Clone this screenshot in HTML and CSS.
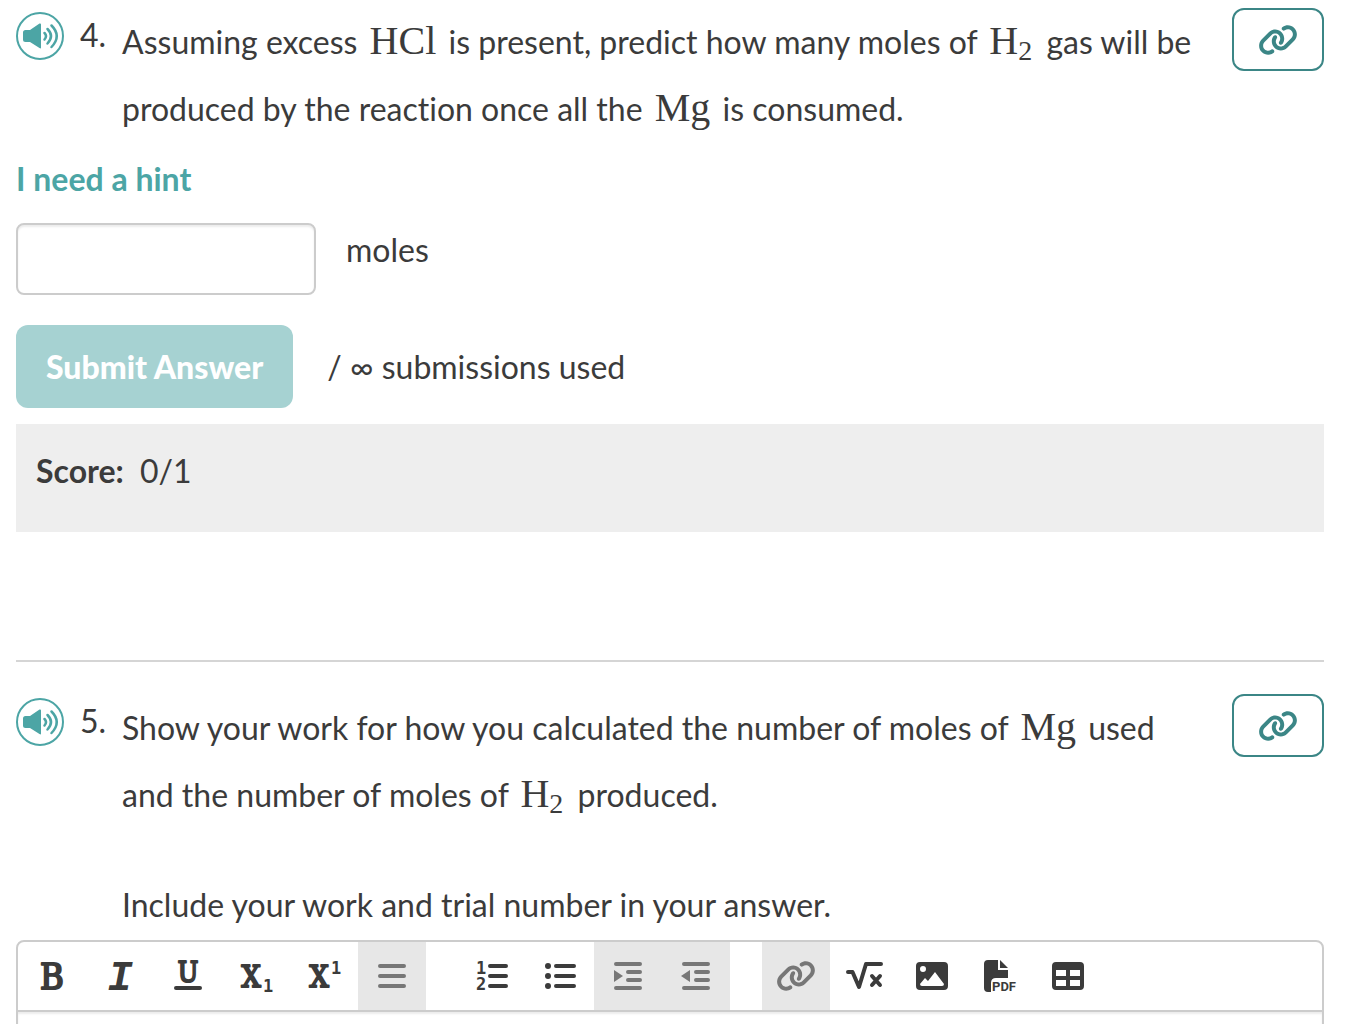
FILE: index.html
```html
<!DOCTYPE html>
<html lang="en">
<head>
    <meta charset="UTF-8">
    <meta name="viewport" content="width=device-width, initial-scale=1.0">
    <title>Lab Questions</title>
    <link rel="stylesheet" href="styles.css">
</head>
<body>
    <!-- shared icons -->
    <svg class="sprite" aria-hidden="true">
        <symbol id="icon-link" viewBox="0 0 640 512">
            <path fill="currentColor" d="M579.8 267.7c56.5-56.5 56.5-148 0-204.5c-50-50-128.8-56.5-186.3-15.4l-1.6 1.1c-14.4 10.3-17.7 30.3-7.4 44.6s30.3 17.7 44.6 7.4l1.6-1.1c32.1-22.9 76-19.3 103.8 8.6c31.5 31.5 31.5 82.5 0 114L422.3 334.8c-31.5 31.5-82.5 31.5-114 0c-27.9-27.9-31.5-71.8-8.6-103.8l1.1-1.6c10.3-14.4 6.9-34.4-7.4-44.6s-34.4-6.9-44.6 7.4l-1.1 1.6C206.5 251.2 213 330 263 380c56.5 56.5 148 56.5 204.5 0L579.8 267.7zM60.2 244.3c-56.5 56.5-56.5 148 0 204.5c50 50 128.8 56.5 186.3 15.4l1.6-1.1c14.4-10.3 17.7-30.3 7.4-44.6s-30.3-17.7-44.6-7.4l-1.6 1.1c-32.1 22.9-76 19.3-103.8-8.6C74 372 74 321 105.5 289.5L217.7 177.2c31.5-31.5 82.5-31.5 114 0c27.9 27.9 31.5 71.8 8.6 103.9l-1.1 1.6c-10.3 14.4-6.9 34.4 7.4 44.6s34.4 6.9 44.6-7.4l1.1-1.6C433.5 260.8 427 182 377 132c-56.5-56.5-148-56.5-204.5 0L60.2 244.3z"/>
        </symbol>
        <symbol id="icon-speaker" viewBox="0 0 48 48">
            <circle cx="24" cy="24" r="23" fill="none" stroke="currentColor" stroke-width="2"/>
            <path fill="currentColor" d="M9.500 18H14L23.500 11.500Q25 11 25 12.500V35.500Q25 37 23.500 36L14 30H9.500Q7 30 7 27.500V20.500Q7 18 9.500 18z"/>
            <path fill="none" stroke="currentColor" stroke-width="2.500" stroke-linecap="round" d="M28.500 21Q31.500 24 28.500 27.500M31.500 17Q38.500 24 31.500 31.500M35.500 13.500Q46 24 35.500 35"/>
        </symbol>
    </svg>

    <section class="question">
        <div class="question-head">
            <button class="speak" aria-label="Read aloud"><svg><use href="#icon-speaker"/></svg></button>
            <span class="number">4.</span>
            <div class="prompt">
                <p>Assuming excess <span class="math">HCl</span> is present, predict how many moles of <span class="math">H<sub>2</sub></span> gas will be produced by the reaction once all the <span class="math">Mg</span> is consumed.</p>
            </div>
            <button class="link-button" aria-label="Copy link"><svg><use href="#icon-link"/></svg></button>
        </div>
        <a class="hint" href="#">I need a hint</a>
        <div class="answer">
            <input type="text" id="moles">
            <label for="moles">moles</label>
        </div>
        <div class="submit-row">
            <button class="submit">Submit Answer</button>
            <span>/ ∞ submissions used</span>
        </div>
        <div class="score"><strong>Score:</strong> <span>0/1</span></div>
    </section>

    <hr>

    <section class="question">
        <div class="question-head">
            <button class="speak" aria-label="Read aloud"><svg><use href="#icon-speaker"/></svg></button>
            <span class="number">5.</span>
            <div class="prompt">
                <p>Show your work for how you calculated the number of moles of <span class="math">Mg</span> used and the number of moles of <span class="math">H<sub>2</sub></span> produced.</p>
                <p>Include your work and trial number in your answer.</p>
            </div>
            <button class="link-button" aria-label="Copy link"><svg><use href="#icon-link"/></svg></button>
        </div>
        <div class="editor">
            <div class="toolbar">
                <button aria-label="Bold">
                    <svg viewBox="0 0 40 40"><text x="20" y="33" class="letter">B</text></svg>
                </button>
                <button aria-label="Italic">
                    <svg viewBox="0 0 40 40"><text x="20" y="34" class="letter italic">I</text></svg>
                </button>
                <button aria-label="Underline">
                    <svg viewBox="0 0 40 40"><text x="20" y="26" class="letter small">U</text><path class="line" d="M8 32H32"/></svg>
                </button>
                <button aria-label="Subscript">
                    <svg viewBox="0 0 40 40"><text x="15" y="31" class="letter medium">X</text><text x="32" y="36" class="digit">1</text></svg>
                </button>
                <button aria-label="Superscript">
                    <svg viewBox="0 0 40 40"><text x="15" y="31" class="letter medium">X</text><text x="32" y="18" class="digit">1</text></svg>
                </button>
                <button aria-label="Text alignment" disabled>
                    <svg viewBox="0 0 40 40"><path class="line" d="M8 10H32M8 20H32M8 30H32"/></svg>
                </button>
                <span class="gap"></span>
                <button aria-label="Numbered list">
                    <svg viewBox="0 0 40 40"><text x="9" y="18" class="digit">1</text><text x="9" y="34" class="digit">2</text><path class="line" d="M18 10H34M18 20H34M18 30H34"/></svg>
                </button>
                <button aria-label="Bulleted list">
                    <svg viewBox="0 0 40 40"><path class="line" d="M16 10H34M16 20H34M16 30H34"/><circle cx="8" cy="10" r="3"/><circle cx="8" cy="20" r="3"/><circle cx="8" cy="30" r="3"/></svg>
                </button>
                <button aria-label="Increase indent" disabled>
                    <svg viewBox="0 0 40 40"><path class="line" d="M8 8H32M20 16H32M20 24H32M8 32H32"/><path d="M6 14L15 20L6 26z"/></svg>
                </button>
                <button aria-label="Decrease indent" disabled>
                    <svg viewBox="0 0 40 40"><path class="line" d="M8 8H32M20 16H32M20 24H32M8 32H32"/><path d="M14 14L5 20L14 26z"/></svg>
                </button>
                <span class="gap"></span>
                <button aria-label="Link" disabled>
                    <svg><use href="#icon-link"/></svg>
                </button>
                <button aria-label="Math">
                    <svg viewBox="0 0 40 40"><path class="line" d="M4 16H8.500L15 31L22 8H37"/><path class="line" d="M28 20L36 29M36 20L28 29"/></svg>
                </button>
                <button aria-label="Image">
                    <svg viewBox="0 0 40 40"><path fill-rule="evenodd" d="M8 6H32Q36 6 36 10V30Q36 34 32 34H8Q4 34 4 30V10Q4 6 8 6zM11 10A3 3 0 1 0 11 16A3 3 0 1 0 11 10zM8 28Q8 30 10 30H30Q32 30 32 28L23 16L16 25L13 22z"/></svg>
                </button>
                <button aria-label="PDF">
                    <svg viewBox="0 0 40 40"><path d="M8 4H18V14H28V22H16Q11 22 11 27V36H8Q4 36 4 32V8Q4 4 8 4zM20 4L28 12H20z"/><text x="24" y="35" class="pdf">PDF</text></svg>
                </button>
                <button aria-label="Table">
                    <svg viewBox="0 0 40 40"><path fill-rule="evenodd" d="M8 6H32Q36 6 36 10V30Q36 34 32 34H8Q4 34 4 30V10Q4 6 8 6zM8 14V20H18V14zM22 14V20H32V14zM8 24V30H18V24zM22 24V30H32V24z"/></svg>
                </button>
            </div>
            <textarea aria-label="Your answer"></textarea>
        </div>
    </section>
</body>
</html>
```

FILE: styles.css
```css
* {
    box-sizing: border-box;
}
html {
    scrollbar-width: none;
}
body {
    margin: 0;
    padding: 8px 26px 0 16px;
    font-family: Lato, sans-serif;
    font-size: 32px;
    font-variant-ligatures: none;
    line-height: 41px;
    color: #3b3b3b;
    background-color: #fff;
}
button, input, textarea {
    font: inherit;
    color: inherit;
}
button {
    padding: 0;
    border: none;
    background: none;
    cursor: pointer;
}
.sprite {
    display: none;
}
.question-head {
    display: flex;
    align-items: flex-start;
}
.speak {
    flex: none;
    width: 48px;
    height: 48px;
    margin-top: 4px;
    color: #4ca5a5;
}
.speak svg {
    display: block;
    width: 48px;
    height: 48px;
}
.number {
    flex: none;
    width: 58px;
    padding-left: 16px;
    line-height: 54px;
}
.prompt {
    flex: 1;
    padding-right: 32px;
}
.prompt p {
    margin: 0;
    line-height: 67px;
}
.prompt p + p {
    margin-top: 43px;
}
.math {
    margin: 0 4px;
    font-family: "Liberation Serif", serif;
    font-size: 40px;
    line-height: 1;
}
.math sub {
    margin-right: 2px;
    font-size: 28px;
    line-height: 0;
    vertical-align: -6px;
}
.link-button {
    flex: none;
    display: flex;
    align-items: center;
    justify-content: center;
    width: 92px;
    height: 63px;
    border: 2px solid #3b8686;
    border-radius: 12px;
    color: #3b8686;
}
.link-button svg {
    width: 40px;
    height: 32px;
}
.hint {
    display: inline-block;
    margin-top: 16px;
    font-weight: bold;
    color: #4ca5a5;
    text-decoration: none;
}
.answer {
    display: flex;
    gap: 30px;
    margin-top: 24px;
}
.answer input {
    width: 300px;
    height: 72px;
    padding: 0 16px;
    border: 2px solid #ccc;
    border-radius: 8px;
    box-shadow: inset 0 2px 2px rgba(0,0,0,0.08);
}
.answer label {
    padding-top: 6px;
}
.submit-row {
    display: flex;
    align-items: center;
    gap: 34px;
    margin-top: 30px;
}
.submit {
    height: 83px;
    padding: 0 30px;
    border-radius: 12px;
    font-weight: 900;
    color: #fff;
    background-color: #a6d2d2;
}
.score {
    min-height: 108px;
    margin-top: 16px;
    padding: 26px 20px;
    background-color: #eee;
}
.score span {
    margin-left: 8px;
}
hr {
    margin: 128px 0 32px;
    border: none;
    border-top: 2px solid #d5d5d5;
}
.editor {
    margin-top: 2px;
    border: 2px solid #ccc;
    border-radius: 8px;
    overflow: hidden;
}
.toolbar {
    display: flex;
    border-bottom: 2px solid #ccc;
}
.toolbar button {
    display: flex;
    align-items: center;
    justify-content: center;
    width: 68px;
    height: 68px;
}
.toolbar button:disabled {
    color: #777;
    background-color: #e7e7e7;
}
.toolbar svg {
    width: 40px;
    height: 40px;
    fill: currentColor;
    overflow: visible;
}
.toolbar .gap {
    width: 32px;
}
.toolbar .line {
    fill: none;
    stroke: currentColor;
    stroke-width: 4px;
    stroke-linecap: round;
    stroke-linejoin: round;
}
.letter {
    font-family: "DejaVu Serif Condensed", "DejaVu Serif", serif;
    font-size: 36px;
    text-anchor: middle;
    stroke: currentColor;
    stroke-width: 2px;
    stroke-linejoin: round;
}
.letter.italic {
    font-family: "Liberation Mono", monospace;
    font-size: 42px;
    font-style: italic;
    font-weight: bold;
    stroke: none;
}
.letter.medium {
    font-size: 30px;
}
.letter.small {
    font-size: 27px;
}
.digit {
    font-family: "DejaVu Sans Mono", monospace;
    font-size: 17px;
    font-weight: bold;
    text-anchor: middle;
}
.pdf {
    font-family: "Roboto", sans-serif;
    font-size: 13px;
    font-weight: bold;
    text-anchor: middle;
}
.editor textarea {
    display: block;
    width: 100%;
    height: 120px;
    padding: 16px;
    border: none;
    resize: none;
    box-shadow: inset 0 2px 2px rgba(0,0,0,0.08);
}
```
